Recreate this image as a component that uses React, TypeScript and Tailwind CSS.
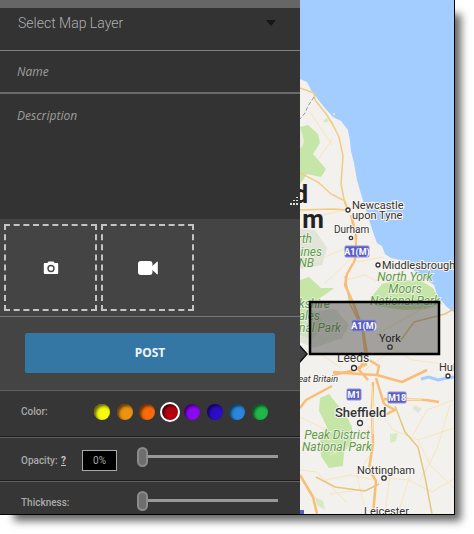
import { useState } from "react";

const COLORS = [
  { name: "Yellow", className: "bg-[#f8f80c]" },
  { name: "Amber", className: "bg-[#ec9212]" },
  { name: "Orange", className: "bg-[#fb6a0c]" },
  { name: "Red", className: "bg-[#b40010]" },
  { name: "Purple", className: "bg-[#8a08f4]" },
  { name: "Indigo", className: "bg-[#2c0cc8]" },
  { name: "Blue", className: "bg-[#2a86dc]" },
  { name: "Green", className: "bg-[#20b648]" },
];

const sliderClass =
  "block h-5 min-w-0 flex-1 cursor-pointer appearance-none bg-transparent outline-none " +
  "[&::-webkit-slider-runnable-track]:h-[3px] [&::-webkit-slider-runnable-track]:bg-[#999] " +
  "[&::-webkit-slider-thumb]:-mt-2 [&::-webkit-slider-thumb]:h-5 [&::-webkit-slider-thumb]:w-[11px] [&::-webkit-slider-thumb]:appearance-none " +
  "[&::-webkit-slider-thumb]:rounded-full [&::-webkit-slider-thumb]:border-2 [&::-webkit-slider-thumb]:border-[#8c8c8c] [&::-webkit-slider-thumb]:bg-[#6e6e6e]";

function CameraIcon() {
  return (
    <svg width="16" height="14" viewBox="0 0 16 14" aria-hidden="true">
      <path
        fill="#fff"
        fillRule="evenodd"
        d="M5.5 0.5h5l1.2 1.5H14.2a1 1 0 0 1 1 1v9a1 1 0 0 1-1 1H1.8a1 1 0 0 1-1-1V3a1 1 0 0 1 1-1h2.5zM8 3.8a3.7 3.7 0 1 0 0 7.4a3.7 3.7 0 0 0 0-7.4zM8 5.2a2.3 2.3 0 1 1 0 4.6a2.3 2.3 0 0 1 0-4.6z"
      />
    </svg>
  );
}

function VideoIcon() {
  return (
    <svg width="20" height="14" viewBox="0 0 20 14" aria-hidden="true">
      <rect width="14.5" height="14" rx="3" fill="#fff" />
      <path d="M14 5.6L18.6 1q1.2-1 1.2.4v11.2q0 1.4-1.2.4L14 8.4z" fill="#fff" />
    </svg>
  );
}

function Shield({ x, y, w, label }: { x: number; y: number; w: number; label: string }) {
  return (
    <g>
      <rect x={x} y={y} width={w} height="11" rx="1" fill="#5a5ec4" stroke="#8e90d8" />
      <text x={x + w / 2} y={y + 9} textAnchor="middle" fontSize="9" fontWeight="700" fill="#fff">
        {label}
      </text>
    </g>
  );
}

function RegionMap() {
  return (
    <svg
      className="absolute inset-0 h-full w-full"
      viewBox="300 0 154 514"
      preserveAspectRatio="xMinYMin slice"
      fontFamily="Roboto, sans-serif"
      role="img"
      aria-label="Map of northern England"
    >
      <rect x="300" width="600" height="900" fill="#a3ccff" />
      <path
        fill="#f3f1ed"
        d="M300 79L307 82L311 90L317 98L324 107L333 117L341 121L348 130L350 141L351 151L354 163L357 180L361 194L366 210L372 229L377 243L382 246L385 254L391 258L405 261L412 269L419 274L427 280L434 285L438 297L447 307L455 313V520H300z"
      />
      <circle cx="334" cy="114" r="1" fill="#eee" />
      {/* parks and woodland */}
      <g fill="#c5e6a6">
        <path d="M300 127L308 125L318 134L320 143L313 154L326 169L321 177L307 174L300 184z" />
        <path d="M300 280L309 277L321 288L334 288L326 294L317 300L312 310L321 318L323 329L312 339L300 335z" />
        <path d="M373 295L382 284L399 280L421 281L433 288L442 304L426 309L405 310L390 308L377 306z" />
        <path d="M320 398L329 394L336 403L345 413L352 427L352 443L344 452L343 466L329 468L321 456L320 438L327 427L319 411z" />
        <path d="M323 121l4-3 2 3-4 2zM390 434l8-1 -2 8 -6 2zM315 497l8 4 2 9-8-5z" opacity="0.6" />
      </g>
      <path d="M300 128l3 8 1 6-2 5-2 1z" fill="#f3f1ed" opacity="0.7" />
      <g fill="#d7dfcf" opacity="0.7">
        <path d="M300 229l15 1 12 18-5 17-22 4z" />
        <path d="M303 313l32-4 14 16-7 13-28 10-14-6z" />
        <path d="M414 405l8 4-4 4-5-4z" />
      </g>
      {/* minor roads */}
      <g fill="none" stroke="#f7e5bd" strokeWidth="1">
        <path d="M310 112l10 15 12 18M333 138l-14 20M352 213l-1 21M349 209l24-7M349 209l-31 7M352 246l-20 8-32 14M359 251l-22 21-13 12M358 262l25-5M346 280l19-5 18 9" />
        <path d="M300 350l22 5 19 13M376 335l26-15 22-12M390 347l22 13 42 5M365 370l24-18M300 417l23 11 13 26M330 455l24-11 20-21M374 404l19 26 25 10 36-12" />
        <path d="M370 455l-13 20 9 39M385 478l24 2 23 12 22-13M390 475l-5 39M413 435l14-25 26-10M418 440l13 26 23 22M300 470l17 2 30 31M321 481l29-6 25 5M330 494l34-5M410 475l-12 39M450 405l-13 44-17 32" />
      </g>
      {/* trunk roads */}
      <g fill="none" stroke="#f2cb83" strokeWidth="1.5">
        <path d="M300 88l14 5 1 7 12 15 7 12M331 121l8 16 4 19-2 28 4 20 3 6M300 173l18 9 13 12 14 7 3 9-15-1-33 1" />
        <path d="M345 276l5 28 12 24 4 36M401 340l13-18 31-8 9-5M395 406l10 26 13 15 7 30 7 37M316 477l19 10 30 4 14-7" stroke="#e4c681" />
      </g>
      {/* motorways */}
      <g fill="none" stroke="#f8bd78" strokeWidth="2.5" strokeLinejoin="round">
        <path d="M351 215l5 19-1 26-8 14-2 11 9 20 9 25 4 24-8 16 9 10M367 364l-16 7-18 4M333 372l26 2 18 1 2-9-10-6M377 375l25 7 25-12M332 386l-26 14-6 8M373 382l-1 27 1 35-4 25 7 12-3 33M376 378l8 26M384 399l42 1 13 2M300 475l13 22 4 17M384 404l11 6-10 5" />
      </g>
      <g fill="none" stroke="#fdf1c4" strokeWidth="1">
        <path d="M355 240l-3 23M367 352l-8 13M372 386l1 48M387 399l35 1" />
      </g>
      <path d="M314 97l-6 9-3 7-5 6" fill="none" stroke="#999" strokeWidth="1" strokeDasharray="4 2" />
      <path d="M421 379l8-2 9 3 9-2 7-1" fill="none" stroke="#a3ccff" strokeWidth="3" />

      <g fill="#5e9d46" fontStyle="italic" fontSize="12" stroke="#f3f1ed" strokeWidth="1.5" paintOrder="stroke">
        <text x="312" y="243" textAnchor="end">North</text>
        <text x="322" y="256" textAnchor="end">Pennines</text>
        <text x="314" y="267" textAnchor="end">AONB</text>
        <g textAnchor="middle">
          <text x="405" y="281">North York</text>
          <text x="405" y="293">Moors</text>
          <text x="405" y="305">National Park</text>
          <text x="337" y="439">Peak District</text>
          <text x="337" y="451">National Park</text>
        </g>
        <g textAnchor="end">
          <text x="330" y="308">Yorkshire</text>
          <text x="320" y="320">Dales</text>
          <text x="341" y="332">National Park</text>
        </g>
      </g>
      <g fill="#222" fontWeight="700" fontSize="25" textAnchor="end">
        <text x="308" y="203">d</text>
        <text x="324" y="228">m</text>
      </g>
      <g fill="#333" fontSize="11" stroke="#f8f6f2" strokeWidth="2" paintOrder="stroke">
        <text x="352" y="209">Newcastle</text>
        <text x="352" y="219">upon Tyne</text>
        <text x="334" y="233" fontSize="10">Durham</text>
        <text x="382" y="269">Middlesbrough</text>
        <text x="337" y="362" fontSize="12">Leeds</text>
        <text x="439" y="371">Hull</text>
        <text x="335" y="417" fontSize="13" fontWeight="500">Sheffield</text>
        <text x="357" y="474">Nottingham</text>
        <text x="364" y="515">Leicester</text>
        <text x="338" y="382" fontSize="9" fontStyle="italic" textAnchor="end">Great Britain</text>
      </g>
      <g fill="#fff" stroke="#333" strokeWidth="1.3">
        <circle cx="348" cy="210" r="2" />
        <circle cx="351" cy="238" r="1.7" />
        <circle cx="378" cy="265" r="2" />
        <circle cx="354" cy="368" r="2.5" />
        <circle cx="448" cy="376" r="2" />
        <circle cx="360" cy="423" r="2.5" />
        <circle cx="384" cy="478" r="2.2" />
      </g>
      <Shield x={345} y={246} w={24} label="A1(M)" />
      <Shield x={347} y={389} w={14} label="M1" />
      <Shield x={388} y={392} w={18} label="M18" />
      <rect x="300" y="510" width="4" height="4" fill="#5a5ec4" />

      {/* selected area */}
      <rect x="310" y="302" width="129" height="52" fill="#333" fillOpacity="0.42" stroke="#000" strokeWidth="2.5" />
      <Shield x={352} y={320} w={24} label="A1(M)" />
      <text x="379" y="342" fontSize="11" fill="#222">York</text>
      <circle cx="390" cy="347" r="2.2" fill="#aaa" stroke="#333" strokeWidth="1.3" />
      <path d="M299 345L307 354L299 363z" fill="#444" stroke="#111" strokeWidth="1.5" />
    </svg>
  );
}

export default function App() {
  const [color, setColor] = useState("Red");
  const [opacity, setOpacity] = useState(0);
  const [thickness, setThickness] = useState(0);

  return (
    <div className="bg-white pr-[19px] pb-[19px] font-['Roboto',sans-serif]">
      <div className="flex border-r border-b border-black shadow-[10px_10px_8px_-4px_rgba(0,0,0,0.6)]">
        <form className="flex w-2/3 max-w-75 shrink-0 flex-col bg-[#363636]" onSubmit={(e) => e.preventDefault()}>
          <div className="h-2 bg-[#666]" />

          <div className="relative h-[43px] border-b border-[#808080] bg-[#333]">
            <select
              aria-label="Map layer"
              className="h-[30px] w-full appearance-none bg-transparent pl-[18px] text-[14px] font-light text-[#b0b0b0] outline-none"
            >
              <option>Select Map Layer</option>
            </select>
            <svg className="pointer-events-none absolute top-3 right-6" width="10" height="6" aria-hidden="true">
              <path d="M0 0h10L5 6z" fill="#161616" />
            </svg>
          </div>

          <input
            type="text"
            aria-label="Name"
            placeholder="Name"
            className="h-[43px] border-b-2 border-[#6a6a6a] bg-[#333] px-[17px] font-['Noto_Sans',sans-serif] text-[12px] text-[#b0b0b0] outline-none placeholder:text-[#989898] placeholder:italic"
          />

          <div className="relative bg-[#333]">
            <textarea
              aria-label="Description"
              placeholder="Description"
              className="block h-[125px] w-full resize-none bg-transparent px-[17px] pt-3.5 font-['Noto_Sans',sans-serif] text-[12px] leading-4 text-[#b0b0b0] outline-none placeholder:text-[#989898] placeholder:italic"
            />
            <svg className="absolute right-0.5 bottom-3.5" width="8" height="8" fill="#ddd" aria-hidden="true">
              <path d="M6 0h2v1h-2zM3 3h2v1h-2zM6 3h2v1h-2zM0 6h2v2h-2zM3 6h2v2h-2zM6 6h2v2h-2z" />
            </svg>
          </div>

          <div className="flex gap-1 border-b border-[#777] bg-[#444] px-1 py-[5px]">
            <button type="button" aria-label="Add photo" className="flex h-[87px] w-[93px] items-center justify-center border-2 border-dashed border-[#c4c4c4]">
              <CameraIcon />
            </button>
            <button type="button" aria-label="Add video" className="flex h-[87px] w-[93px] items-center justify-center border-2 border-dashed border-[#c4c4c4]">
              <VideoIcon />
            </button>
          </div>

          <div className="border-b border-[#606060] bg-[#444] px-[25px] pt-4 pb-[17px]">
            <button
              type="submit"
              className="block h-10 w-full rounded-xs bg-[#3477a5] font-['Noto_Sans',sans-serif] text-[12px] font-bold text-[#eef4fa]"
            >
              POST
            </button>
          </div>

          <div
            role="radiogroup"
            aria-labelledby="color-label"
            className="flex h-[46px] items-center border-b border-[#1c1c1c] pr-8 pb-1 pl-[21px]"
          >
            <span id="color-label" className="w-[73px] text-[10px] font-medium text-[#aaa]">Color:</span>
            <div className="flex flex-1 justify-between">
              {COLORS.map((c) => (
                <input
                  key={c.name}
                  type="radio"
                  name="color"
                  aria-label={c.name}
                  checked={color === c.name}
                  onChange={() => setColor(c.name)}
                  className={`size-4 cursor-pointer appearance-none rounded-full shadow-[inset_2px_2px_3px_rgba(0,0,0,0.6)] checked:outline-2 checked:outline-white ${c.className}`}
                />
              ))}
            </div>
          </div>

          <div className="flex h-11 items-start border-t border-b border-t-[#606060] border-b-[#1c1c1c] pt-2 pr-[22px] pl-[21px]">
            <div className="flex h-7 w-[116px] items-center text-[10px] font-medium text-[#aaa]">
              <label htmlFor="opacity" className="w-10">Opacity:</label>
              <a href="#opacity-help" className="w-[21px] font-bold text-[#c4c4c4] underline">?</a>
              <output htmlFor="opacity" className="flex h-[21px] w-[35px] items-center justify-center border border-[#aaa] bg-black font-normal">
                {opacity}%
              </output>
            </div>
            <input
              id="opacity"
              type="range"
              value={opacity}
              onChange={(e) => setOpacity(Number(e.target.value))}
              className={sliderClass}
            />
          </div>

          <div className="flex h-[33px] items-start overflow-hidden border-t border-[#606060] pt-2 pr-[22px] pl-[21px]">
            <label htmlFor="thickness" className="flex h-6 w-[116px] items-center text-[10px] font-medium text-[#aaa]">
              Thickness:
            </label>
            <input
              id="thickness"
              type="range"
              value={thickness}
              onChange={(e) => setThickness(Number(e.target.value))}
              className={sliderClass}
            />
          </div>
        </form>

        <div className="relative min-w-0 flex-1 overflow-hidden">
          <RegionMap />
        </div>
      </div>
    </div>
  );
}
